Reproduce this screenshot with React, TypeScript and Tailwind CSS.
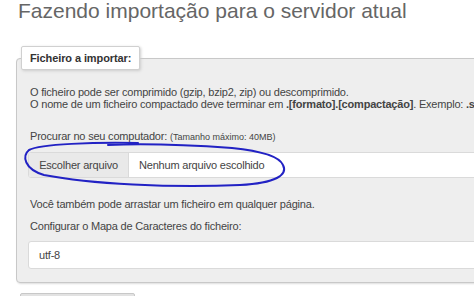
import React from "react";

// Contorno desenhado à mão por cima do campo de ficheiro
function HandCircle() {
  return (
    <svg
      className="absolute left-0 top-0 pointer-events-none"
      width="474"
      height="296"
      viewBox="0 0 474 296"
      fill="none"
    >
      <path
        d="M 138 143 C 95 142, 40 144, 29 150 C 22 156, 24 169, 44 175 C 90 184, 170 188, 240 185 C 276 183, 288 175, 283 165 C 279 156, 262 151, 232 148 C 190 145, 150 143, 108 145"
        stroke="#2222c4"
        strokeWidth="2"
        strokeLinecap="round"
      />
    </svg>
  );
}

export default function App() {
  return (
    <div className="relative w-[474px] h-[296px] overflow-hidden bg-white font-['Liberation_Sans',Arial,sans-serif] text-[#444]">
      <div className="w-[800px]">
        <h2 className="ml-[18px] text-[21px] leading-none text-[#666] font-normal whitespace-nowrap">
          Fazendo importação para o servidor atual
        </h2>

        <fieldset className="ml-[16px] mt-[25px] w-[760px] border border-[#c8c8c8] rounded-[4px] bg-[#eee] pl-1 pb-[13px] shadow-[1px_1px_2px_#ddd]">
          <legend className="h-[24px] px-2 bg-white border border-[#d0d0d0] rounded-[2px] text-[11px] tracking-[-0.1px] leading-[22px] font-bold text-[#333] shadow-[1px_1px_3px_#ccc]">
            Ficheiro a importar:
          </legend>

          <div className="pl-[9px] pt-[16px] text-[11px] tracking-[-0.2px] leading-[12px] whitespace-nowrap">
            <div>O ficheiro pode ser comprimido (gzip, bzip2, zip) ou descomprimido.</div>
            <div>
              O nome de um ficheiro compactado deve terminar em{" "}
              <b>.[formato].[compactação]</b>. Exemplo: <b>.sql.zip</b>
            </div>

            <div className="mt-[20px]">
              Procurar no seu computador:{" "}
              <span className="text-[9px] tracking-normal">(Tamanho máximo: 40MB)</span>
            </div>

            <div className="-ml-[2px] mt-[9px] h-[26px] flex border border-[#dadada] rounded-[3px] bg-white overflow-hidden">
              <div className="w-[100px] flex items-center justify-center bg-[#e9e9e9] border-r border-[#dadada]">
                Escolher arquivo
              </div>
              <div className="pl-[10px] flex items-center">Nenhum arquivo escolhido</div>
            </div>

            <div className="mt-[20px]">
              Você também pode arrastar um ficheiro em qualquer página.
            </div>

            <div className="mt-[10px]">Configurar o Mapa de Caracteres do ficheiro:</div>

            <div className="-ml-[2px] mt-[9px] h-[28px] flex items-center pl-[10px] border border-[#dadada] rounded-[3px] bg-white">
              utf-8
            </div>
          </div>
        </fieldset>

        <div className="ml-[20px] mt-[10px] w-[115px] h-[20px] bg-[#e2e2e2] border border-[#c8c8c8] rounded-[2px]" />
      </div>
      <HandCircle />
    </div>
  );
}
